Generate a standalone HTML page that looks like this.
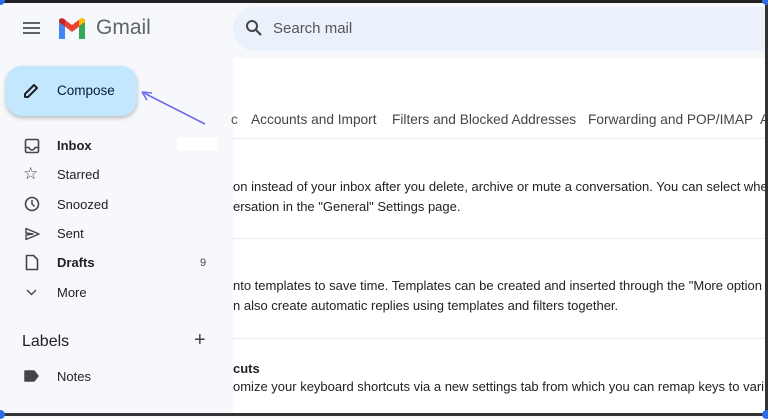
<!DOCTYPE html>
<html><head><style>
*{margin:0;padding:0;box-sizing:border-box}
body{width:768px;height:416px;overflow:hidden;background:#f6f8fc;font-family:"Liberation Sans",Arial,sans-serif;color:#202124;position:relative}
.abs{position:absolute;white-space:nowrap}
.topb{position:absolute;left:0;top:0;width:768px;height:3px;background:#222}
.botb{position:absolute;left:0;top:413px;width:768px;height:3px;background:#333}
.rb{position:absolute;left:765px;top:0;width:3px;height:416px;background:#333}
.search{position:absolute;left:233px;top:7px;width:540px;height:44px;background:#eaf1fb;border-radius:22px 0 0 22px}
.main{position:absolute;left:233px;top:58px;width:532px;height:355px;background:#fff}
.line{position:absolute;left:233px;width:532px;height:1px;background:#ececec}
.c{font-size:13px;color:#222}
.t{font-size:13.7px;color:#444}
.nav{font-size:13px;color:#202124}
</style></head><body>
<div class="search"></div>
<div class="main"></div>
<div class="abs" style="left:23px;top:22px;width:17px;height:2px;background:#5f6368"></div>
<div class="abs" style="left:23px;top:27px;width:17px;height:2px;background:#5f6368"></div>
<div class="abs" style="left:23px;top:32px;width:17px;height:2px;background:#5f6368"></div>
<svg class="abs" style="left:57px;top:17px" width="30" height="23" viewBox="0 0 30 23">
<path d="M2 5 L2 22 L8 22 L8 9Z" fill="#4285f4"/>
<path d="M22 9 L22 22 L28 22 L28 5Z" fill="#34a853"/>
<path d="M2 5 L15 15 L28 5 L28 3 Q26 0 23 2 L15 8 L7 2 Q4 0 2 3Z" fill="#ea4335"/>
<path d="M22 9 L28 5 L28 3 Q26 0 23 2 L22 3Z" fill="#fbbc04"/>
<path d="M2 5 L2 3 Q4 0 7 2 L8 3 L8 9Z" fill="#c5221f"/>
</svg>
<div class="abs" style="left:96px;top:16px;font-size:21px;color:#5f6368">Gmail</div>
<svg class="abs" style="left:245px;top:19px" width="18" height="18" viewBox="0 0 18 18"><circle cx="7" cy="7" r="5" fill="none" stroke="#444" stroke-width="2"/><path d="M11 11 L16 16" stroke="#444" stroke-width="2.2"/></svg>
<div class="abs" style="left:273px;top:20px;font-size:15px;color:#555">Search mail</div>
<div class="abs" style="left:6px;top:66px;width:131px;height:50px;background:#c2e7ff;border-radius:16px;box-shadow:0 2px 4px rgba(0,0,0,.25)"></div>
<svg class="abs" style="left:22px;top:82px" width="18" height="18" viewBox="0 0 18 18"><path d="M3 15 L3 12 L12 3 L15 6 L6 15Z" fill="none" stroke="#202124" stroke-width="2" stroke-linejoin="round"/></svg>
<div class="abs" style="left:57px;top:83px;font-size:13.5px;color:#001d35">Compose</div>
<svg class="abs" style="left:138px;top:88px" width="70" height="40" viewBox="0 0 70 40"><path d="M67 36 L6 5" stroke="#6c6cf0" stroke-width="1.6"/><path d="M4 4 L14 5 M4 4 L9 12" stroke="#6c6cf0" stroke-width="1.6" fill="none"/></svg>
<div class="abs" style="left:177px;top:137px;width:41px;height:14px;background:#fff"></div>
<svg class="abs" style="left:24px;top:138px" width="16" height="16" viewBox="0 0 16 16"><rect x="1.5" y="1.5" width="13" height="13" rx="1.5" fill="none" stroke="#444" stroke-width="1.6"/><path d="M1.5 9.5 H5 Q6 12 8 12 Q10 12 11 9.5 H14.5" fill="none" stroke="#444" stroke-width="1.5"/></svg>
<div class="abs nav" style="left:57px;top:138px;font-weight:bold">Inbox</div>
<div class="abs" style="left:23px;top:164px;font-size:17px;color:#444">☆</div>
<div class="abs nav" style="left:57px;top:167px">Starred</div>
<svg class="abs" style="left:24px;top:196px" width="16" height="16" viewBox="0 0 16 16"><circle cx="8" cy="8" r="6.5" fill="none" stroke="#444" stroke-width="1.6"/><path d="M8 4 V8 L10.5 10.5" fill="none" stroke="#444" stroke-width="1.5"/></svg>
<div class="abs nav" style="left:57px;top:197px">Snoozed</div>
<svg class="abs" style="left:25px;top:227px" width="15" height="14" viewBox="0 0 15 14"><path d="M1 1.5 L14 7 L1 12.5 L1 8 L8 7 L1 6Z" fill="none" stroke="#444" stroke-width="1.4" stroke-linejoin="round"/></svg>
<div class="abs nav" style="left:57px;top:226px">Sent</div>
<svg class="abs" style="left:25px;top:254px" width="14" height="17" viewBox="0 0 14 17"><path d="M1.5 1.5 H8.5 L12.5 5.5 V15.5 H1.5Z" fill="none" stroke="#444" stroke-width="1.6" stroke-linejoin="round"/></svg>
<div class="abs nav" style="left:57px;top:255px;font-weight:bold">Drafts</div>
<div class="abs" style="left:200px;top:257px;font-size:11px;color:#444">9</div>
<svg class="abs" style="left:26px;top:289px" width="11" height="7" viewBox="0 0 11 7"><path d="M1 1 L5.5 5.5 L10 1" fill="none" stroke="#444" stroke-width="1.4"/></svg>
<div class="abs nav" style="left:57px;top:285px">More</div>
<div class="abs" style="left:22px;top:333px;font-size:16px;color:#202124">Labels</div>
<div class="abs" style="left:194px;top:329px;font-size:20px;color:#444">+</div>
<svg class="abs" style="left:24px;top:370px" width="15" height="12" viewBox="0 0 15 12"><path d="M1 1 H10 L14 6 L10 11 H1Z" fill="#444" stroke="#444" stroke-linejoin="round" stroke-width="1.5"/></svg>
<div class="abs nav" style="left:57px;top:369px">Notes</div>
<div class="abs t" style="left:231px;top:112px;color:#555">c</div>
<div class="abs t" style="left:251px;top:112px">Accounts and Import</div>
<div class="abs t" style="left:392px;top:112px">Filters and Blocked Addresses</div>
<div class="abs t" style="left:588px;top:112px">Forwarding and POP/IMAP</div>
<div class="abs t" style="left:760px;top:112px">A</div>
<div class="line" style="top:138px"></div>
<div class="abs c" style="left:233px;top:179px">on instead of your inbox after you delete, archive or mute a conversation. You can select whe</div>
<div class="abs c" style="left:233px;top:199px">ersation in the "General" Settings page.</div>
<div class="line" style="top:238px"></div>
<div class="abs c" style="left:233px;top:278px">nto templates to save time. Templates can be created and inserted through the "More option</div>
<div class="abs c" style="left:233px;top:298px">n also create automatic replies using templates and filters together.</div>
<div class="line" style="top:338px"></div>
<div class="abs c" style="left:233px;top:361px;font-weight:bold">cuts</div>
<div class="abs c" style="left:233px;top:379px">omize your keyboard shortcuts via a new settings tab from which you can remap keys to vari</div>
<div class="topb"></div><div class="botb"></div><div class="rb"></div>
<div class="abs" style="left:-4px;top:-4px;width:9px;height:9px;border-radius:50%;background:#2b6de8"></div>
<div class="abs" style="left:762px;top:-4px;width:9px;height:9px;border-radius:50%;background:#2b6de8"></div>
<div class="abs" style="left:-4px;top:410px;width:9px;height:9px;border-radius:50%;background:#2b6de8"></div>
<div class="abs" style="left:762px;top:410px;width:9px;height:9px;border-radius:50%;background:#2b6de8"></div>
</body></html>
